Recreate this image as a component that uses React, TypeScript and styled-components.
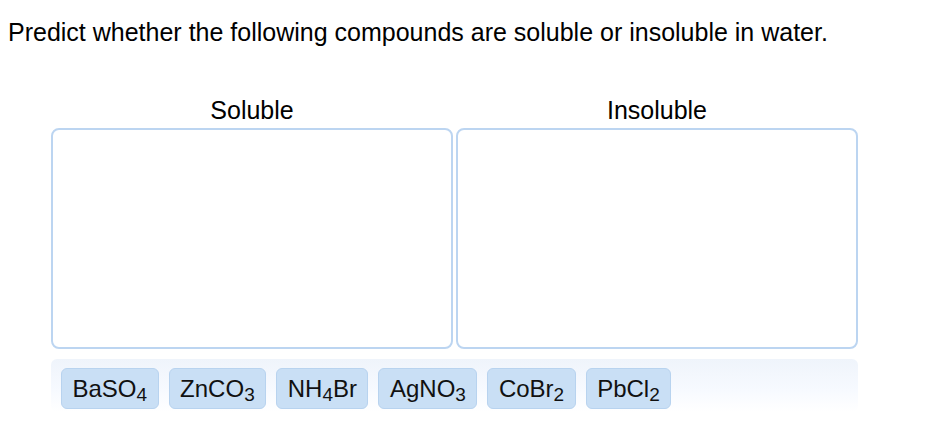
import React from "react";
import styled, { createGlobalStyle } from "styled-components";

const GlobalStyle = createGlobalStyle`
  html, body {
    margin: 0;
    padding: 0;
    background: #ffffff;
  }
  body {
    font-family: "Liberation Sans", Arial, sans-serif;
    color: #000000;
  }
`;

const Page = styled.div`
  width: 940px;
  height: 426px;
  box-sizing: border-box;
  padding: 17px 8px 0 8px;
`;

const Prompt = styled.p`
  margin: 0;
  font-size: 25px;
  line-height: 30px;
`;

const Workspace = styled.div`
  margin: 51px 0 0 43px;
  width: 807px;
`;

const Columns = styled.div`
  display: grid;
  grid-template-columns: 1fr 1fr;
  column-gap: 3px;
`;

const Column = styled.div`
  display: flex;
  flex-direction: column;
  align-items: stretch;
`;

const ColumnLabel = styled.div`
  text-align: center;
  font-size: 25px;
  line-height: 24px;
  height: 30px;
`;

const DropZone = styled.div`
  height: 221px;
  box-sizing: border-box;
  border: 2px solid #bcd5f1;
  border-radius: 8px;
  background: #ffffff;
`;

const Tray = styled.div`
  margin-top: 10px;
  display: flex;
  gap: 10px;
  padding: 9px 10px 3px 10px;
  border-radius: 6px;
  background: linear-gradient(to bottom, #eff4fb 0%, #f7faff 60%, #ffffff 100%);
`;

const Chip = styled.div`
  height: 41px;
  box-sizing: border-box;
  padding: 0 10.5px;
  display: flex;
  align-items: center;
  font-size: 24px;
  color: #111111;
  background: #c9dff5;
  border: 1px solid #b8d3ef;
  border-radius: 6px;
`;

const Formula = styled.span`
  line-height: 28px;
  white-space: nowrap;
`;

const Sub = styled.sub`
  font-size: 19px;
  line-height: 0;
  vertical-align: -4px;
`;

type Part = string | { sub: string };

const compounds: Part[][] = [
  ["BaSO", { sub: "4" }],
  ["ZnCO", { sub: "3" }],
  ["NH", { sub: "4" }, "Br"],
  ["AgNO", { sub: "3" }],
  ["CoBr", { sub: "2" }],
  ["PbCl", { sub: "2" }],
];

export default function App() {
  return (
    <Page>
      <GlobalStyle />
      <Prompt>
        Predict whether the following compounds are soluble or insoluble in water.
      </Prompt>
      <Workspace>
        <Columns>
          <Column>
            <ColumnLabel>Soluble</ColumnLabel>
            <DropZone />
          </Column>
          <Column>
            <ColumnLabel>Insoluble</ColumnLabel>
            <DropZone />
          </Column>
        </Columns>
        <Tray>
          {compounds.map((parts, i) => (
            <Chip key={i}>
              <Formula>
                {parts.map((p, j) =>
                  typeof p === "string" ? p : <Sub key={j}>{p.sub}</Sub>
                )}
              </Formula>
            </Chip>
          ))}
        </Tray>
      </Workspace>
    </Page>
  );
}
